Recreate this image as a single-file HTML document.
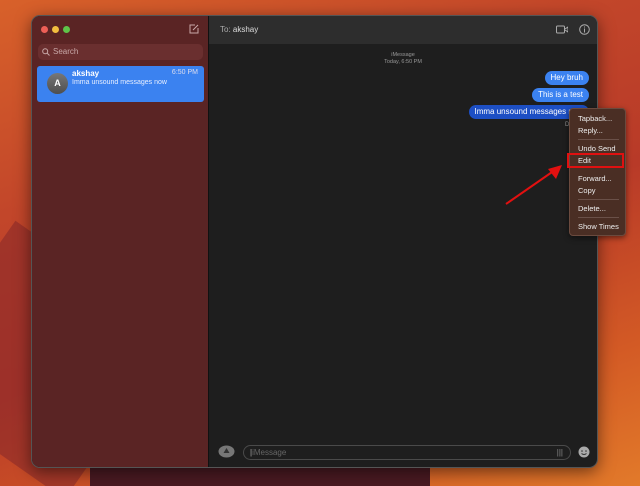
<!DOCTYPE html>
<html><head><meta charset="utf-8"><style>
*{margin:0;padding:0;box-sizing:border-box}
html,body{width:640px;height:486px;overflow:hidden}
body{position:relative;font-family:"Liberation Sans",sans-serif;
background:linear-gradient(160deg,#d8612a 0%,#c2462a 30%,#b83a28 55%,#d35a25 80%,#e27a2a 100%)}
.bg2{position:absolute;left:-60px;top:260px;width:200px;height:200px;background:#8a2a2a;transform:rotate(35deg);opacity:.6}
.bg3{position:absolute;left:90px;top:460px;width:340px;height:26px;background:#4a1a22}
.win{position:absolute;left:31px;top:15px;width:567px;height:453px;border-radius:9px;overflow:hidden;background:#1e1e1e;box-shadow:0 4px 16px rgba(0,0,0,.5);border:1px solid #555}
.side{position:absolute;left:0;top:0;width:177px;height:100%;background:#5a2424;border-right:1px solid #111}
.dot{position:absolute;top:10px;width:7px;height:7px;border-radius:50%}
.search{position:absolute;left:6px;top:28px;width:165px;height:16px;border-radius:5px;background:#6a2f2f;color:#c9a9a9;font-size:8px;line-height:16px;padding-left:15px}
.sel{position:absolute;left:5px;top:50px;width:167px;height:36px;border-radius:3px;background:#3b82f0;color:#fff}
.av{position:absolute;left:10px;top:7px;width:21px;height:21px;border-radius:50%;background:linear-gradient(#777,#4e4e4e);font-size:9px;font-weight:bold;text-align:center;line-height:21px}
.hdr{position:absolute;left:177px;top:0;right:0;height:28px;background:#2d2d2d;color:#ddd;font-size:8px;line-height:28px;padding-left:11px}
.b{position:absolute;border-radius:8px;color:#fff;font-size:8px;height:14px;line-height:14px;padding:0 6px;background:#3b82f0}
.menu{position:absolute;left:569px;top:108px;width:57px;height:128px;background:#4a2e24;border-radius:4px;border:1px solid #6a4a3e;box-shadow:0 2px 6px rgba(0,0,0,.5);color:#eee;font-size:7.5px}
.menu div{position:absolute;left:8px}
.sep{height:1px;background:#6a5048;width:41px}
</style></head><body>
<div class="bg2"></div><div class="bg3"></div>
<div class="win">
 <div class="side">
  <div class="dot" style="left:9px;background:#ed5f57"></div>
  <div class="dot" style="left:20px;background:#f2bd3f"></div>
  <div class="dot" style="left:31px;background:#5fc449"></div>
  <svg style="position:absolute;left:157px;top:8px" width="10" height="10" viewBox="0 0 10 10"><path d="M6 1H1v8h8V4M4 6l5-5" stroke="#c9a9a9" fill="none" stroke-width="1"/></svg>
  <div class="search"><svg style="position:absolute;left:4px;top:4px" width="8" height="8"><circle cx="3.2" cy="3.2" r="2.5" stroke="#c9a9a9" fill="none"/><path d="M5 5l2.5 2.5" stroke="#c9a9a9"/></svg>Search</div>
  <div class="sel"><div class="av">A</div>
   <div style="position:absolute;left:35px;top:3px;font-size:8px;font-weight:bold">akshay</div>
   <div style="position:absolute;right:6px;top:3px;font-size:7px;color:#dde">6:50 PM</div>
   <div style="position:absolute;left:35px;top:13px;font-size:7px;color:#e6eeff">Imma unsound messages now</div></div>
 </div>
 <div class="hdr"><span style="color:#aaa">To:</span> akshay
  <svg style="position:absolute;left:347px;top:9px" width="12" height="9"><rect x="0.5" y="1" width="8" height="7" rx="1" stroke="#aaa" fill="none"/><path d="M9 4l3-2v5l-3-2" stroke="#aaa" fill="none"/></svg>
  <svg style="position:absolute;left:370px;top:8px" width="11" height="11"><circle cx="5.5" cy="5.5" r="4.8" stroke="#aaa" fill="none"/><path d="M5.5 4.5v4M5.5 2.5v1" stroke="#aaa"/></svg>
 </div>
 <div style="position:absolute;left:177px;right:0;top:36px;text-align:center;color:#999;font-size:5.5px;line-height:7px">iMessage<br>Today, 6:50 PM</div>
 <div class="b" style="right:8px;top:55px">Hey bruh</div>
 <div class="b" style="right:8px;top:72px">This is a test</div>
 <div class="b" style="right:8px;top:89px;background:#1d4fc4">Imma unsound messages now</div>
 <div style="position:absolute;left:533px;top:106px;color:#999;font-size:6px">De</div>
 <svg style="position:absolute;left:186px;top:429px" width="17" height="13"><ellipse cx="8.5" cy="6.5" rx="8" ry="6" fill="#777"/><path d="M8.5 3l-3 5h6z" fill="#333"/></svg>
 <div style="position:absolute;left:211px;top:429px;width:328px;height:15px;border:1px solid #4a4a4a;border-radius:8px;color:#666;font-size:8px;line-height:13px;padding-left:6px"><span style="color:#aaa">|</span>iMessage
  <span style="position:absolute;right:7px;top:0;color:#888;font-size:8px">|||</span></div>
 <svg style="position:absolute;left:546px;top:430px" width="12" height="12"><circle cx="6" cy="6" r="5.5" fill="#aaa"/><circle cx="4" cy="5" r=".8" fill="#333"/><circle cx="8" cy="5" r=".8" fill="#333"/><path d="M3.5 7.5q2.5 2 5 0" stroke="#333" fill="none"/></svg>
</div>
<div class="menu">
 <div style="top:5px">Tapback...</div>
 <div style="top:17px">Reply...</div>
 <div class="sep" style="top:30px"></div>
 <div style="top:35px">Undo Send</div>
 <div style="top:47px">Edit</div>
 <div style="top:65px">Forward...</div>
 <div style="top:77px">Copy</div>
 <div class="sep" style="top:90px"></div>
 <div style="top:95px">Delete...</div>
 <div class="sep" style="top:108px"></div>
 <div style="top:113px">Show Times</div>
</div>
<div style="position:absolute;left:567px;top:153px;width:57px;height:15px;border:2px solid #e01010"></div>
<svg style="position:absolute;left:500px;top:160px" width="70" height="50"><path d="M6 44L55 10" stroke="#e21010" stroke-width="2"/><path d="M62 5L48 9l8 10z" fill="#e21010"/></svg>
</body></html>
